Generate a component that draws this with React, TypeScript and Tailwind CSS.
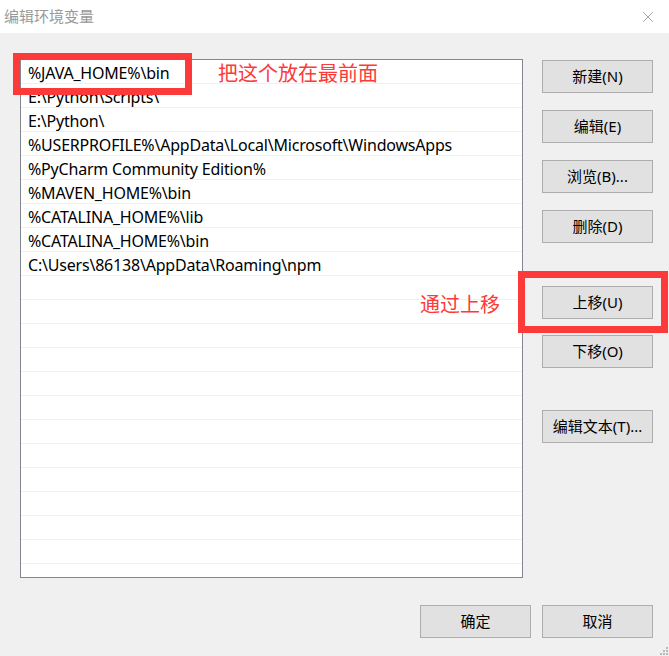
import { X } from "lucide-react"

const PATHS = [
  "%JAVA_HOME%\\bin",
  "E:\\Python\\Scripts\\",
  "E:\\Python\\",
  "%USERPROFILE%\\AppData\\Local\\Microsoft\\WindowsApps",
  "%PyCharm Community Edition%",
  "%MAVEN_HOME%\\bin",
  "%CATALINA_HOME%\\lib",
  "%CATALINA_HOME%\\bin",
  "C:\\Users\\86138\\AppData\\Roaming\\npm",
]

const FONT = "font-['Noto_Sans','Noto_Sans_CJK_SC',sans-serif]"

function WinButton({ label, className = "" }: { label: string; className?: string }) {
  return (
    <button
      className={`h-[33px] w-[111px] border border-[#adadad] bg-[#e1e1e1] text-[15px] text-black ${className}`}
    >
      {label}
    </button>
  )
}

export default function App() {
  const rows = [...PATHS, ...Array(13).fill("")]

  return (
    <div className={`relative flex h-[656px] w-[669px] flex-col overflow-hidden bg-[#f0f0f0] ${FONT}`}>
      {/* title bar */}
      <div className="flex h-[33px] items-center justify-between bg-white pl-[4px] pr-[12px]">
        <span className="text-[15px] text-[#999999]">编辑环境变量</span>
        <X className="h-[18px] w-[18px] text-[#8a8a8a]" strokeWidth={1} />
      </div>

      <div className="flex">
        {/* path list */}
        <div className="ml-[20px] mt-[26px] h-[519px] w-[503px] overflow-hidden border border-[#828790] bg-white">
          {rows.map((p, i) => (
            <div
              key={i}
              className="flex h-[24px] shrink-0 items-center border-b border-[#f0f0f0] pl-[7px] pt-[3px] text-[16px] tracking-[-0.2px] text-black"
            >
              {p}
            </div>
          ))}
        </div>

        {/* side buttons */}
        <div className="ml-[19px] mt-[27px] flex flex-col">
          <WinButton label="新建(N)" />
          <WinButton label="编辑(E)" className="mt-[17px]" />
          <WinButton label="浏览(B)..." className="mt-[17px]" />
          <WinButton label="删除(D)" className="mt-[17px]" />
          <WinButton label="上移(U)" className="mt-[43px]" />
          <WinButton label="下移(O)" className="mt-[16px]" />
          <WinButton label="编辑文本(T)..." className="mt-[42px]" />
        </div>
      </div>

      {/* bottom buttons */}
      <div className="mt-[27px] flex justify-end gap-[11px] pr-[16px]">
        <WinButton label="确定" />
        <WinButton label="取消" />
      </div>

      {/* resize grip */}
      <svg className="absolute bottom-0 right-0" width="10" height="10" viewBox="0 0 10 10">
        <rect x="7" y="1" width="2" height="2" fill="#b8b8b8" />
        <rect x="4" y="4" width="2" height="2" fill="#b8b8b8" />
        <rect x="7" y="4" width="2" height="2" fill="#b8b8b8" />
        <rect x="1" y="7" width="2" height="2" fill="#b8b8b8" />
        <rect x="4" y="7" width="2" height="2" fill="#b8b8b8" />
        <rect x="7" y="7" width="2" height="2" fill="#b8b8b8" />
      </svg>

      {/* annotations */}
      <div className="absolute left-[13px] top-[53px] h-[42px] w-[179px] border-[7px] border-[#fc3a3a]" />
      <span className="absolute left-[218px] top-[60px] text-[20px] leading-[28px] text-[#fc3a3a]">把这个放在最前面</span>
      <div className="absolute left-[518px] top-[271px] h-[62px] w-[150px] border-[7px] border-[#fc3a3a]" />
      <span className="absolute left-[420px] top-[291px] text-[20px] leading-[28px] text-[#fc3a3a]">通过上移</span>
    </div>
  )
}
